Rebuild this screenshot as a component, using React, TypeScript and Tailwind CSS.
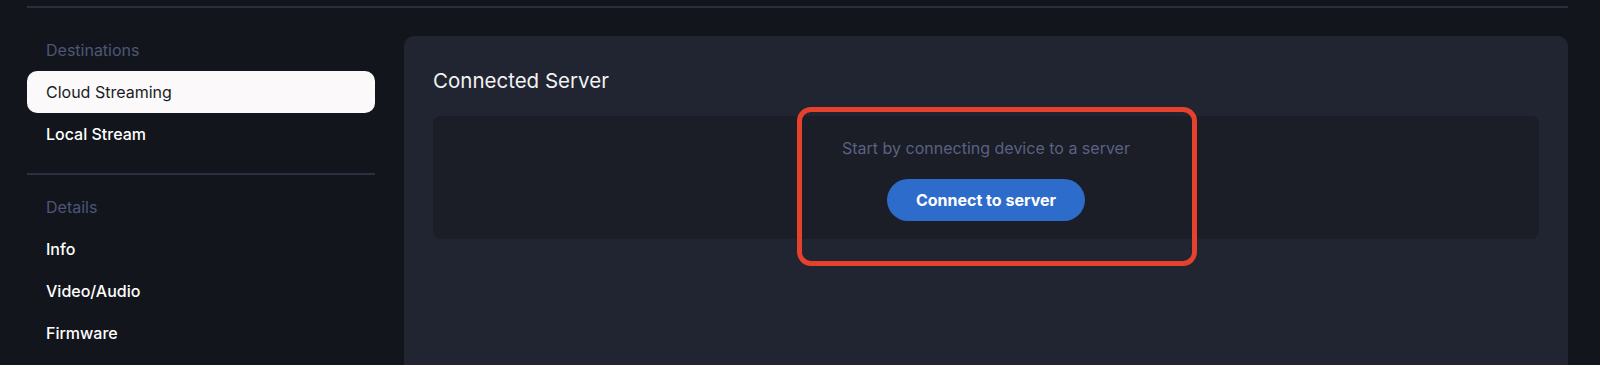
import React from 'react';

const navRow = 'flex h-[42px] items-center rounded-[10px] px-[19px] text-[16px]';

const Sidebar: React.FC = () => (
  <aside className="w-[348px] shrink-0 pt-[32px]">
    <div className="px-[19px] text-[16px] leading-[20px] text-[#4d5675]">Destinations</div>
    <div className="mt-[11px]">
      <div className={`${navRow} bg-[#fbf9f9] text-[#1a1c24]`}>Cloud Streaming</div>
      <div className={`${navRow} font-medium text-white`}>Local Stream</div>
    </div>

    <div className="mt-[18px] h-[2px] bg-[#2b2f3e]" />

    <div className="mt-[22px] px-[19px] text-[16px] leading-[20px] text-[#4d5675]">Details</div>
    <div className="mt-[11px]">
      <div className={`${navRow} font-medium text-white`}>Info</div>
      <div className={`${navRow} font-medium text-white`}>Video/Audio</div>
      <div className={`${navRow} font-medium text-white`}>Firmware</div>
    </div>
  </aside>
);

const ConnectedServer: React.FC = () => (
  <section className="mt-[28px] h-[360px] flex-1 rounded-[10px] bg-[#212431] px-[29px] pt-[31px]">
    <h2 className="text-[20.5px] leading-[28px] text-[#f2f2f2]">Connected Server</h2>

    <div className="relative mt-[21px] flex flex-col items-center rounded-[8px] bg-[#1b1d27] pb-[18px] pt-[22px]">
      <p className="text-[16px] leading-[20px] text-[#5a6282]">Start by connecting device to a server</p>
      <button className="mt-[21px] h-[42px] w-[198px] rounded-full bg-[#2e6ccb] text-[16px] font-bold text-white">
        Connect to server
      </button>

      {/* annotation */}
      <div className="pointer-events-none absolute left-[364px] top-[-9px] h-[159px] w-[400px] rounded-[14px] border-[5px] border-[#e5412d]" />
    </div>
  </section>
);

export default function App() {
  return (
    <div
      className="h-[365px] overflow-hidden bg-[#13151d] pl-[27px] pr-[32px]"
      style={{ fontFamily: 'Inter, "Noto Sans", sans-serif' }}
    >
      <div className="pt-[6px]">
        <div className="h-[2px] bg-[#2b2e3d]" />
      </div>
      <div className="flex gap-[29px]">
        <Sidebar />
        <ConnectedServer />
      </div>
    </div>
  );
}
